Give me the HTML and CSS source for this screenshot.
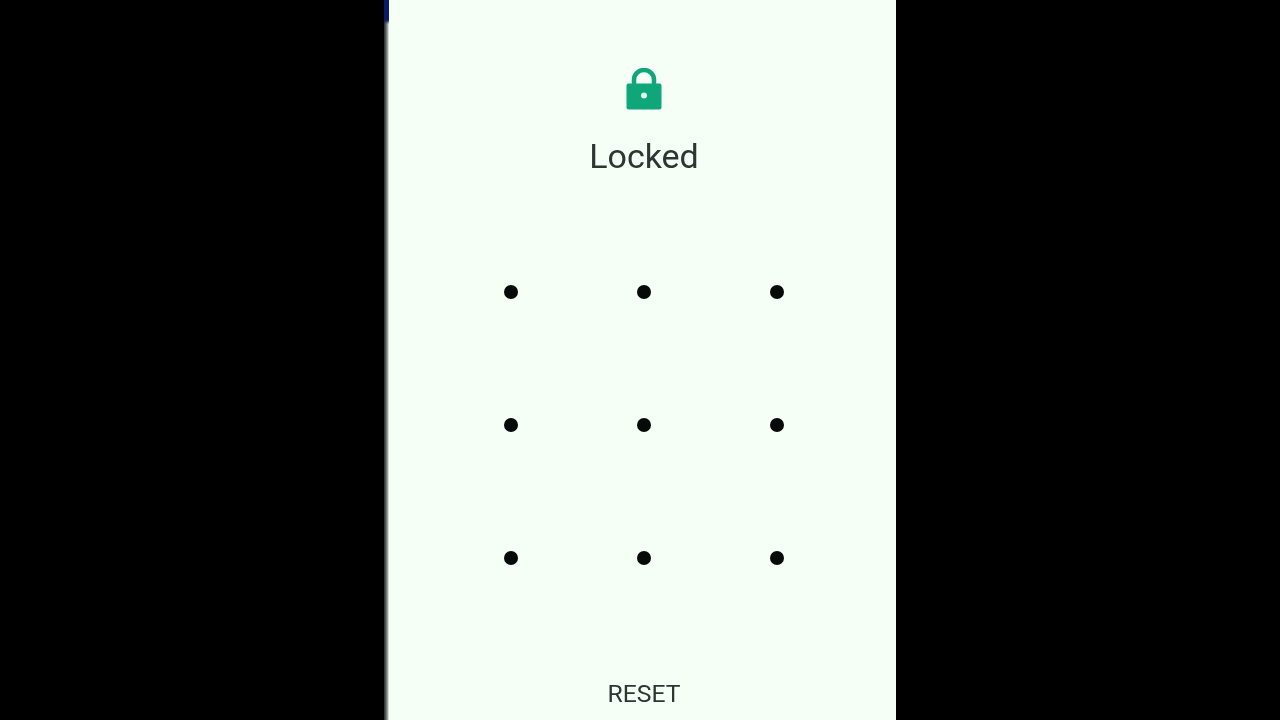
FILE: index.html
```html
<!DOCTYPE html>
<html lang="en">
<head>
<meta charset="utf-8">
<title>Locked</title>
<link rel="stylesheet" href="styles.css">
</head>
<body>
<main class="phone">
  <div class="edge"></div>
  <section class="screen">
    <svg class="lock" viewBox="0 0 36 42" aria-hidden="true">
      <path class="shackle" d="M8 19V11.5a10 9.5 0 0 1 20 0V19"/>
      <rect class="body" x="0.5" y="15.5" width="35" height="26" rx="2"/>
      <circle class="keyhole" cx="18" cy="27.5" r="3"/>
    </svg>
    <h1 class="title">Locked</h1>
    <div class="pattern">
      <span class="dot"></span><span class="dot"></span><span class="dot"></span>
      <span class="dot"></span><span class="dot"></span><span class="dot"></span>
      <span class="dot"></span><span class="dot"></span><span class="dot"></span>
    </div>
    <button class="reset" type="button">RESET</button>
  </section>
</main>
</body>
</html>
```
FILE: styles.css
```css
* { box-sizing: border-box; }
html, body { height: 100%; }
body {
  margin: 0;
  background: #000;
  display: flex;
  justify-content: center;
  overflow: hidden;
  font-family: Roboto, "Liberation Sans", sans-serif;
}
.phone {
  width: 512px;
  height: 720px;
  display: flex;
  background: #f6fff5;
}
.edge {
  width: 5px;
  flex: none;
  background:
    linear-gradient(to bottom, #0a1a66 0, #0a1a66 20px, transparent 24px),
    linear-gradient(to right, #2a2c2c 0, #5d6160 40%, #a6aaa8 75%, #eef6f0 100%);
}
.screen {
  flex: 1;
  display: flex;
  flex-direction: column;
  align-items: center;
  padding: 68px 0 0 3px;
  background: #f6fff5;
}
.lock {
  width: 36px;
  height: 42px;
  display: block;
  filter: blur(0.7px);
}
.shackle { fill: none; stroke: #0fa67a; stroke-width: 4.5; }
.body { fill: #0fa67a; }
.keyhole { fill: #e4f8ee; }
.title {
  margin: 25px 0 0;
  font-size: 34px;
  line-height: 42px;
  font-weight: 400;
  color: #2e3532;
  filter: blur(0.5px);
}
.pattern {
  margin-top: 48px;
  display: grid;
  grid-template-columns: repeat(3, 133px);
  grid-auto-rows: 133px;
  justify-items: center;
  align-items: center;
}
.dot {
  width: 14px;
  height: 14px;
  border-radius: 50%;
  background: #060a08;
  filter: blur(0.6px);
}
.reset {
  margin-top: 54px;
  padding: 0;
  border: 0;
  background: none;
  font: 400 24.7px/32px Roboto, "Liberation Sans", sans-serif;
  color: #2e3532;
  filter: blur(0.6px);
}
```
